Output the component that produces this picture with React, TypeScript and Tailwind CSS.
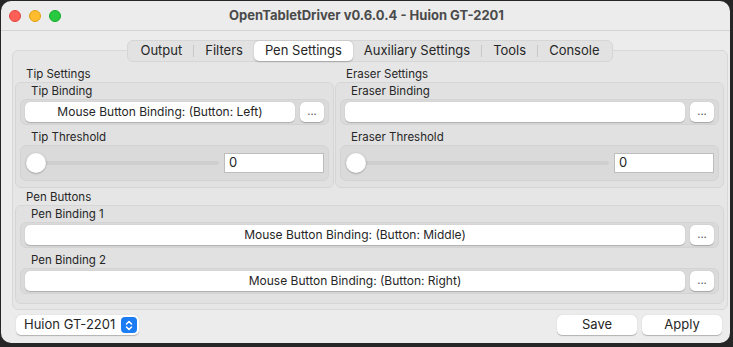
import React from "react";

const font = { fontFamily: "Inter, 'Noto Sans', sans-serif" };

function Dots() {
  return (
    <button className="w-[24px] h-[20px] rounded-[5px] bg-white shadow-[0_0.5px_1px_rgba(0,0,0,0.25)] flex items-center justify-center text-[11px] leading-none text-[#555] pb-[2px]">
      ...
    </button>
  );
}

function BindingRow({ text }: { text: string }) {
  return (
    <div className="flex items-center gap-[5px] h-[26px] px-[4px] rounded-[6px] bg-[#dadada] border border-[#d3d3d3]">
      <div className="flex-1 h-[20px] rounded-[5px] bg-white shadow-[0_0.5px_1px_rgba(0,0,0,0.2)] flex items-center justify-center text-[12px] text-[#262626]">
        {text}
      </div>
      <Dots />
    </div>
  );
}

function SliderRow() {
  return (
    <div className="flex items-center gap-[5px] h-[36px] pl-[5px] pr-[4px] rounded-[6px] bg-[#dadada] border border-[#d3d3d3]">
      <div className="relative flex-1 h-[20px] flex items-center">
        <div className="w-full h-[4px] rounded-full bg-[#cfcfcf]" />
        <div className="absolute left-0 top-0 w-[20px] h-[20px] rounded-full bg-white shadow-[0_0.5px_2px_rgba(0,0,0,0.35)]" />
      </div>
      <div className="w-[100px] h-[20px] bg-white border border-[#bdbdbd] flex items-center pl-[4px] text-[13px] text-[#262626]">
        0
      </div>
    </div>
  );
}

function SubLabel({ children, top = 0 }: { children: React.ReactNode; top?: number }) {
  return (
    <div className={(top ? "mt-[5px] " : "") + "h-[15px] pl-[11px] text-[11.5px] leading-[15px] text-[#262626]"}>
      {children}
    </div>
  );
}

function Group({
  title,
  children,
  className = "",
  boxClass = "",
}: {
  title: string;
  children: React.ReactNode;
  className?: string;
  boxClass?: string;
}) {
  return (
    <div className={"flex flex-col " + className}>
      <div className="h-[16px] pl-[11px] text-[11.5px] leading-[16px] text-[#262626]">{title}</div>
      <div className={"rounded-[6px] bg-[#e1e1e1] border border-[#d6d6d6] px-[4px] flex flex-col " + boxClass}>
        {children}
      </div>
    </div>
  );
}

export default function App() {
  const tabs = ["Output", "Filters", "Pen Settings", "Auxiliary Settings", "Tools", "Console"];
  return (
    <div className="w-[733px] h-[347px] bg-[#262626] pt-[1px] pl-[1px]" style={font}>
      <div className="w-[729px] h-[342px] rounded-[10px] bg-[#ececec] flex flex-col overflow-hidden">
        {/* title bar */}
        <div className="relative h-[30px] shrink-0 border-b border-[#d4d4d4] flex items-center justify-center">
          <div className="absolute left-[8px] top-[9px] flex gap-[8px]">
            <div className="w-[12px] h-[12px] rounded-full bg-[#fe5f57] border border-[#e2463f]" />
            <div className="w-[12px] h-[12px] rounded-full bg-[#febc2e] border border-[#e1a116]" />
            <div className="w-[12px] h-[12px] rounded-full bg-[#28c840] border border-[#12ac28]" />
          </div>
          <div className="text-[13px] font-bold text-[#4a4a4a] pl-[2px]">OpenTabletDriver v0.6.0.4 - Huion GT-2201</div>
        </div>

        {/* content */}
        <div className="flex flex-col pl-[11px] pr-[2px] pt-[9px]">
          {/* tabs */}
          <div className="relative z-10 self-center flex items-center h-[22px] rounded-[6px] bg-[#e2e2e2] border border-[#d6d6d6] px-[1px] text-[13px] text-[#262626]">
            {tabs.map((t, i) => {
              const sel = t === "Pen Settings";
              const nextSel = tabs[i + 1] === "Pen Settings";
              const last = i === tabs.length - 1;
              return (
                <React.Fragment key={t}>
                  <div
                    className={
                      sel
                        ? "h-[20px] px-[11px] rounded-[5px] bg-white shadow-[0_0.5px_1.5px_rgba(0,0,0,0.25)] flex items-center"
                        : "h-[20px] px-[11px] flex items-center"
                    }
                  >
                    {t}
                  </div>
                  {!last && !sel && !nextSel && <div className="w-px h-[12px] bg-[#c8c8c8]" />}
                </React.Fragment>
              );
            })}
          </div>

          {/* panel */}
          <div className="-mt-[12px] rounded-[6px] bg-[#e6e6e6] border border-[#d8d8d8] pt-[15px] pb-[5px] pl-[2px] pr-[3px] flex flex-col gap-[1px]">
            <div className="flex gap-[1px]">
              <Group title="Tip Settings" className="w-[319px]" boxClass="pt-[1px] pb-[6px]">
                <SubLabel>Tip Binding</SubLabel>
                <BindingRow text="Mouse Button Binding: (Button: Left)" />
                <SubLabel top={1}>Tip Threshold</SubLabel>
                <SliderRow />
              </Group>
              <Group title="Eraser Settings" className="flex-1" boxClass="pt-[1px] pb-[6px]">
                <SubLabel>Eraser Binding</SubLabel>
                <BindingRow text="" />
                <SubLabel top={1}>Eraser Threshold</SubLabel>
                <SliderRow />
              </Group>
            </div>
            <Group title="Pen Buttons" boxClass="pt-[1px] pb-[9px]">
              <SubLabel>Pen Binding 1</SubLabel>
              <BindingRow text="Mouse Button Binding: (Button: Middle)" />
              <SubLabel top={1}>Pen Binding 2</SubLabel>
              <BindingRow text="Mouse Button Binding: (Button: Right)" />
            </Group>
          </div>

          {/* bottom row */}
          <div className="flex items-center mt-[5px] pr-[6px] ml-[4px]">
            <div className="flex items-center h-[20px] w-[123px] rounded-[5px] bg-white shadow-[0_0.5px_1px_rgba(0,0,0,0.25)] pl-[8px] pr-[2px] text-[13px] text-[#262626]">
              <span className="flex-1">Huion GT-2201</span>
              <div className="w-[16px] h-[16px] rounded-[4px] bg-[#1b7cf4] flex items-center justify-center">
                <svg width="8" height="11" viewBox="0 0 8 11" fill="none" stroke="white" strokeWidth="1.5" strokeLinecap="round" strokeLinejoin="round">
                  <path d="M1.5 4 L4 1.5 L6.5 4" />
                  <path d="M1.5 7 L4 9.5 L6.5 7" />
                </svg>
              </div>
            </div>
            <div className="flex-1" />
            <button className="w-[80px] h-[20px] rounded-[5px] bg-white shadow-[0_0.5px_1px_rgba(0,0,0,0.25)] text-[13px] text-[#262626] flex items-center justify-center">Save</button>
            <button className="ml-[5px] w-[80px] h-[20px] rounded-[5px] bg-white shadow-[0_0.5px_1px_rgba(0,0,0,0.25)] text-[13px] text-[#262626] flex items-center justify-center">Apply</button>
          </div>
        </div>
      </div>
    </div>
  );
}
